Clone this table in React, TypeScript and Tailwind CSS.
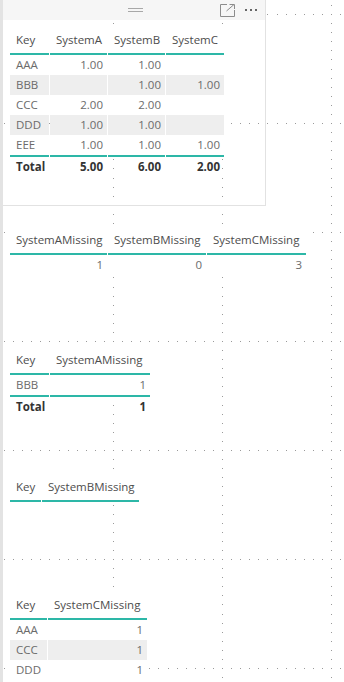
import React from 'react';

type Col = { label: string; w: string; right?: boolean };
type Row = { cells: string[]; shade?: boolean };

const STEP = 109 / 12;

const GridDots: React.FC = () => {
  const xs = [113, 222, 331];
  const ys = [14, 123, 232, 341, 450, 559, 668];
  const dots: React.ReactNode[] = [];
  // vertical dotted lines
  xs.forEach((x) => {
    for (let c = -95; c < 682; c += 109) {
      for (let k = 0; k < 12; k++) {
        const y = Math.round(c + k * STEP);
        if (y >= 0 && y < 682) dots.push(<rect key={`v${x}-${y}`} x={x} y={y} width={1} height={1} />);
      }
    }
  });
  // horizontal dotted lines
  ys.forEach((y) => {
    for (let c = 4; c < 344; c += 109) {
      for (let k = 0; k < 12; k++) {
        const x = Math.round(c + k * STEP);
        if (x < 344) dots.push(<rect key={`h${y}-${x}`} x={x} y={y} width={1} height={1} />);
      }
    }
  });
  return (
    <svg className="absolute inset-0" width={344} height={682} fill="#9a9a9a" aria-hidden="true">
      {dots}
    </svg>
  );
};

const Table: React.FC<{ cols: Col[]; rows: Row[]; total?: string[] }> = ({ cols, rows, total }) => {
  return (
    <div className="flex flex-col text-[11.5px]">
      {/* header */}
      <div className="flex gap-px">
        {cols.map((c) => (
          <div
            key={c.label}
            className={`${c.w} h-[29px] flex items-center pl-[6px] pr-[4px] bg-white border-b-2 border-[#2db7a7] text-[#4d4d4d] whitespace-nowrap`}
          >
            {c.label}
          </div>
        ))}
      </div>

      {rows.map((r, i) => (
        <div key={i} className="flex gap-px">
          {cols.map((c, j) => (
            <div
              key={j}
              className={`${c.w} h-[20px] flex items-center pl-[6px] pr-[4px] text-[#6b6b6b] ${r.shade ? 'bg-[#eeeeee]' : 'bg-white'} ${c.right ? 'justify-end' : ''}`}
            >
              {r.cells[j]}
            </div>
          ))}
        </div>
      ))}

      {total && (
        <div className="flex gap-px">
          {cols.map((c, j) => (
            <div
              key={j}
              className={`${c.w} h-[22px] flex items-center pl-[6px] pr-[4px] border-t-2 border-[#2db7a7] font-bold text-[#333333] ${c.right ? 'justify-end' : ''}`}
            >
              {total[j]}
            </div>
          ))}
        </div>
      )}
    </div>
  );
};

const App: React.FC = () => {
  return (
    <div className="relative w-[344px] h-[682px] bg-white overflow-hidden font-['Open_Sans','Noto_Sans',sans-serif]">
      <GridDots />

      <div className="relative flex h-full">
        {/* left edge strip */}
        <div className="w-[3px] h-full bg-[#e3e3e3]" />

        <div className="flex flex-col">
          {/* Card: table of systems */}
          <div className="w-[263px] h-[206px] border-r border-b border-[#e2e2e2] flex flex-col">
            <div className="h-[20px] bg-[#f6f6f6] relative flex items-center">
              <div className="ml-[125px] flex flex-col gap-[2px]">
                <div className="w-[15px] h-px bg-[#a8a8a8]" />
                <div className="w-[15px] h-px bg-[#a8a8a8]" />
              </div>
              <svg className="ml-[77px]" width="15" height="13" viewBox="0 0 15 13" fill="none" stroke="#8c8c8c" strokeWidth="1" aria-hidden="true">
                <path d="M7 0.5H0.5V12.5H14.5V6" />
                <path d="M6.5 7L14 0.5" />
                <path d="M9.5 0.5H14.5V5" />
              </svg>
              <div className="ml-[10px] flex gap-[3px]">
                <span className="w-[2px] h-[2px] bg-[#666666]" />
                <span className="w-[2px] h-[2px] bg-[#666666]" />
                <span className="w-[2px] h-[2px] bg-[#666666]" />
              </div>
            </div>
            <div className="ml-[7px] mt-[6px]">
              <Table
                cols={[
                  { label: 'Key', w: 'w-[39px]' },
                  { label: 'SystemA', w: 'w-[57px]', right: true },
                  { label: 'SystemB', w: 'w-[57px]', right: true },
                  { label: 'SystemC', w: 'w-[58px]', right: true },
                ]}
                rows={[
                  { cells: ['AAA', '1.00', '1.00', ''] },
                  { cells: ['BBB', '', '1.00', '1.00'], shade: true },
                  { cells: ['CCC', '2.00', '2.00', ''] },
                  { cells: ['DDD', '1.00', '1.00', ''], shade: true },
                  { cells: ['EEE', '1.00', '1.00', '1.00'] },
                ]}
                total={['Total', '5.00', '6.00', '2.00']}
              />
            </div>
          </div>

          {/* Missing counts */}
          <div className="ml-[7px] mt-[20px]">
            <Table
              cols={[
                { label: 'SystemAMissing', w: 'w-[97px]', right: true },
                { label: 'SystemBMissing', w: 'w-[98px]', right: true },
                { label: 'SystemCMissing', w: 'w-[99px]', right: true },
              ]}
              rows={[{ cells: ['1', '0', '3'] }]}
            />
          </div>

          <div className="ml-[7px] mt-[71px]">
            <Table
              cols={[
                { label: 'Key', w: 'w-[39px]' },
                { label: 'SystemAMissing', w: 'w-[100px]', right: true },
              ]}
              rows={[{ cells: ['BBB', '1'] }]}
              total={['Total', '1']}
            />
          </div>

          <div className="ml-[7px] mt-[56px]">
            <Table
              cols={[
                { label: 'Key', w: 'w-[31px]' },
                { label: 'SystemBMissing', w: 'w-[97px]', right: true },
              ]}
              rows={[]}
            />
          </div>

          <div className="ml-[7px] mt-[89px]">
            <Table
              cols={[
                { label: 'Key', w: 'w-[37px]' },
                { label: 'SystemCMissing', w: 'w-[99px]', right: true },
              ]}
              rows={[
                { cells: ['AAA', '1'] },
                { cells: ['CCC', '1'], shade: true },
                { cells: ['DDD', '1'] },
              ]}
            />
          </div>
        </div>
      </div>
    </div>
  );
};

export default App;
